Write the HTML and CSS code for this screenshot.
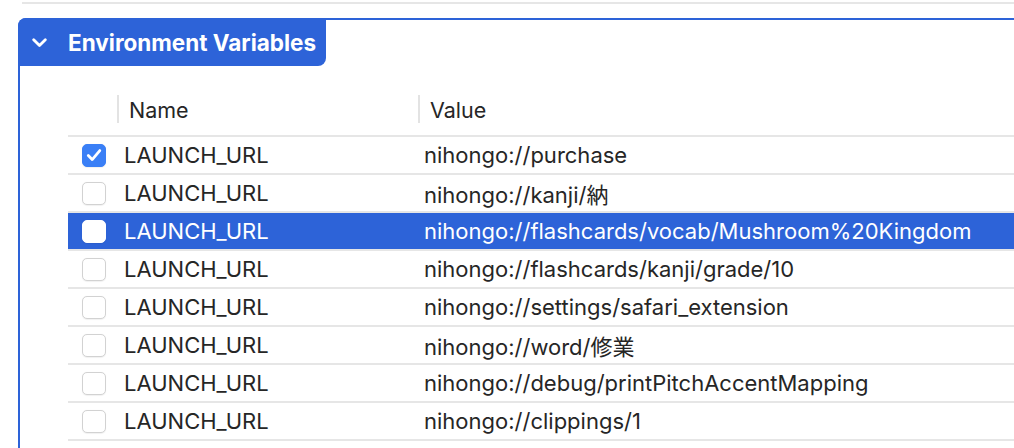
FILE: index.html
```html
<!DOCTYPE html>
<html lang="en">
<head>
<meta charset="utf-8">
<title>Environment Variables</title>
<link rel="stylesheet" href="styles.css">
</head>
<body>
<div class="topline"></div>
<section class="panel">
  <div class="tab">
    <svg class="chev" width="15" height="10" viewBox="0 0 15 10"><path d="M1.7 1.8 L7.5 7.6 L13.3 1.8" fill="none" stroke="#fff" stroke-width="2.8" stroke-linecap="round" stroke-linejoin="round"/></svg>
    <span class="tab-title">Environment Variables</span>
  </div>
  <div class="table">
    <div class="thead">
      <div class="h-check"></div>
      <div class="h-name">Name</div>
      <div class="h-value">Value</div>
    </div>
    <div class="row">
      <div class="c-check"><span class="box checked"><svg width="24" height="24" viewBox="0 0 24 24"><path d="M6.3 12.6 L10.2 16.6 L17.8 7.6" fill="none" stroke="#fff" stroke-width="2.8" stroke-linecap="round" stroke-linejoin="round"/></svg></span></div>
      <div class="c-name">LAUNCH_URL</div>
      <div class="c-value">nihongo://purchase</div>
    </div>
    <div class="row">
      <div class="c-check"><span class="box"></span></div>
      <div class="c-name">LAUNCH_URL</div>
      <div class="c-value">nihongo://kanji/納</div>
    </div>
    <div class="row selected">
      <div class="c-check"><span class="box"></span></div>
      <div class="c-name">LAUNCH_URL</div>
      <div class="c-value">nihongo://flashcards/vocab/Mushroom%20Kingdom</div>
    </div>
    <div class="row">
      <div class="c-check"><span class="box"></span></div>
      <div class="c-name">LAUNCH_URL</div>
      <div class="c-value">nihongo://flashcards/kanji/grade/10</div>
    </div>
    <div class="row">
      <div class="c-check"><span class="box"></span></div>
      <div class="c-name">LAUNCH_URL</div>
      <div class="c-value">nihongo://settings/safari_extension</div>
    </div>
    <div class="row">
      <div class="c-check"><span class="box"></span></div>
      <div class="c-name">LAUNCH_URL</div>
      <div class="c-value">nihongo://word/修業</div>
    </div>
    <div class="row">
      <div class="c-check"><span class="box"></span></div>
      <div class="c-name">LAUNCH_URL</div>
      <div class="c-value">nihongo://debug/printPitchAccentMapping</div>
    </div>
    <div class="row">
      <div class="c-check"><span class="box"></span></div>
      <div class="c-name">LAUNCH_URL</div>
      <div class="c-value">nihongo://clippings/1</div>
    </div>
  </div>
</section>
</body>
</html>
```
FILE: styles.css
```css
html, body {
  margin: 0;
  padding: 0;
  background: #fff;
  overflow: hidden;
}
body {
  width: 1014px;
  height: 448px;
  font-family: Inter, "Noto Sans CJK JP", sans-serif;
  color: #262626;
}
.topline {
  margin: 2px 0 0 22px;
  height: 2px;
  background: #e6e6e6;
}
.panel {
  margin: 14px 0 0 18px;
  border-top: 2px solid #2d63d8;
  border-left: 2px solid #2d63d8;
  border-top-left-radius: 8px;
  height: 440px;
}
.tab {
  margin: -2px 0 0 -2px;
  width: 308px;
  height: 48px;
  background: #2d63d8;
  border-radius: 8px 0 8px 0;
  display: flex;
  align-items: center;
  color: #fff;
}
.chev {
  margin-left: 14px;
  margin-top: 1px;
}
.tab-title {
  margin-left: 21px;
  font-weight: 700;
  font-size: 22.5px;
}
.table {
  margin-left: 48px;
  font-size: 22px;
}
.thead {
  display: flex;
  align-items: flex-end;
  height: 69px;
  border-bottom: 2px solid #e6e6e6;
}
.h-check { width: 49px; }
.h-name, .h-value {
  height: 28px;
  line-height: 30px;
  margin-bottom: 12px;
  border-left: 2px solid #e3e3e3;
  padding-left: 10px;
  box-sizing: border-box;
  font-size: 21.5px;
}
.h-name { width: 301px; }
.h-value { flex: 1; }
.row {
  display: flex;
  align-items: center;
  height: 36px;
  border-bottom: 2px solid #e6e6e6;
}
.row.selected {
  background: #2d63d8;
  color: #fff;
}
.c-check {
  width: 49px;
  display: flex;
  align-items: center;
}
.box {
  margin-left: 14px;
  width: 24px;
  height: 23px;
  box-sizing: border-box;
  border: 1px solid #d2d2d2;
  border-radius: 5px;
  background: #fff;
  box-shadow: 0 0.5px 1px rgba(0,0,0,0.06);
  display: flex;
  align-items: center;
  justify-content: center;
}
.box.checked {
  background: #3a7ff6;
  border-color: #3a7ff6;
}
.box svg { display: block; margin: -1px; }
.selected .box { border-color: #fff; }
.c-name {
  width: 301px;
  padding-left: 7px;
  box-sizing: border-box;
}
.c-value {
  flex: 1;
  padding-left: 6px;
  white-space: nowrap;
}
```
